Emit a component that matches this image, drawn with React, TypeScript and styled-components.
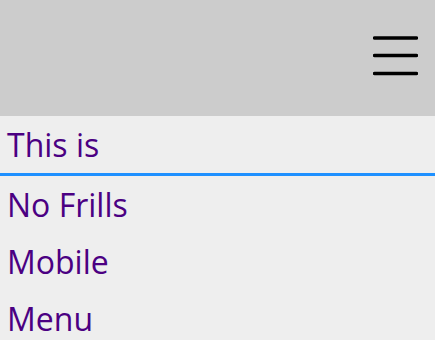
import styled, { createGlobalStyle } from "styled-components";

const GlobalStyle = createGlobalStyle`
  html, body {
    margin: 0;
    padding: 0;
    background: #eeeeee;
    font-family: "Open Sans", "Noto Sans", sans-serif;
  }
`;

const Header = styled.header`
  height: 116px;
  background: #cccccc;
  display: flex;
  align-items: center;
  justify-content: flex-end;
  padding: 0 17px 5px 0;
  box-sizing: border-box;
`;

const MenuButton = styled.button`
  border: 0;
  padding: 0;
  background: none;
  display: flex;
  cursor: pointer;
`;

const Nav = styled.nav`
  display: flex;
  flex-direction: column;
`;

const Item = styled.a<{ $active?: boolean }>`
  display: block;
  padding: 6px 7px;
  font-size: 32px;
  line-height: 45px;
  color: #4b0082;
  text-decoration: none;
  border-bottom: ${(p) => (p.$active ? "3px solid #1e90ff" : "0")};
`;

const items = ["This is", "No Frills", "Mobile", "Menu"];

function Hamburger() {
  return (
    <svg width="45" height="40" viewBox="0 0 45 40">
      <g stroke="#000" strokeWidth="3.4" strokeLinecap="round">
        <line x1="1.5" y1="2" x2="43.5" y2="2" />
        <line x1="1.5" y1="19.5" x2="43.5" y2="19.5" />
        <line x1="1.5" y1="37.5" x2="43.5" y2="37.5" />
      </g>
    </svg>
  );
}

export default function App() {
  return (
    <>
      <GlobalStyle />
      <Header>
        <MenuButton aria-label="Menu">
          <Hamburger />
        </MenuButton>
      </Header>
      <Nav>
        {items.map((label, i) => (
          <Item key={label} href="#" $active={i === 0}>
            {label}
          </Item>
        ))}
      </Nav>
    </>
  );
}
